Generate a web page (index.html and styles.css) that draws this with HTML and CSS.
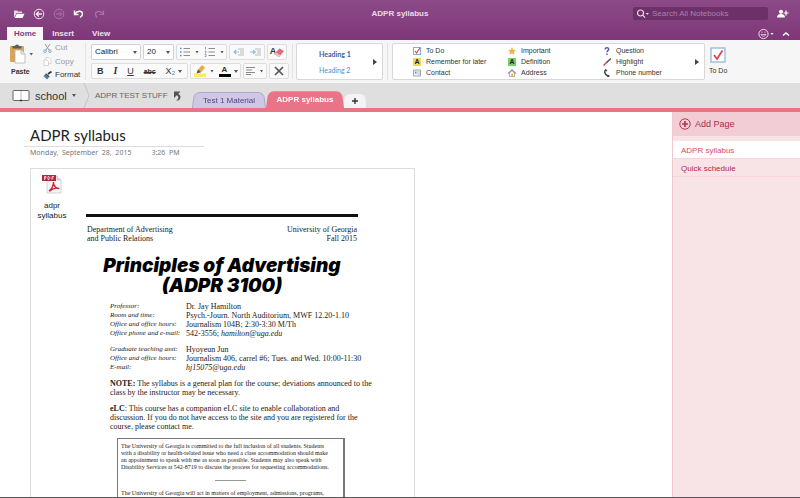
FILE: index.html
```html
<!DOCTYPE html>
<html lang="en">
<head>
<meta charset="utf-8">
<title>ADPR syllabus</title>
<link rel="stylesheet" href="styles.css">
</head>
<body>
<header class="top">
  <div class="titlebar">
    <div class="quick">
      <button aria-label="Open"><svg width="12" height="10" viewBox="0 0 12 10"><path d="M1 8V1.500h3l1 1h4V4H3.500L1.500 8.500z" fill="#e8d5e6"/><path d="M3.800 4.800H11.500L9.500 9H1.800z" fill="#fff"/></svg></button>
      <button aria-label="Back"><svg width="12" height="12" viewBox="0 0 12 12" fill="none" stroke="#f2e5f0"><circle cx="6" cy="6" r="4.800"/><path d="M9 6H3.500M5.800 3.500L3.300 6l2.500 2.500" stroke-width="1.300"/></svg></button>
      <button aria-label="Forward" disabled><svg width="12" height="12" viewBox="0 0 12 12" fill="none" stroke="#aa79a7"><circle cx="6" cy="6" r="4.800"/><path d="M3 6h5.500M6.200 3.500L8.700 6 6.200 8.500"/></svg></button>
      <button aria-label="Undo"><svg width="12" height="10" viewBox="0 0 12 10" fill="none" stroke="#fff" stroke-width="1.400"><path d="M1.500 1.500v4h4M2 5C4 1.500 9 1.500 9.500 4.500 9.700 6.500 8.500 7.500 7 8.500"/></svg></button>
      <button aria-label="Redo" disabled><svg width="12" height="10" viewBox="0 0 12 10" fill="none" stroke="#a574a3" stroke-width="1.200"><path d="M10.500 1.500v4h-4M10 5C8 1.500 3 1.500 2.500 4.500 2.300 6.500 3 7.500 4 8.500"/></svg></button>
    </div>
    <h1 class="window-title">ADPR syllabus</h1>
    <div class="find">
      <label class="search">
        <svg width="14" height="10" viewBox="0 0 14 10" fill="none" stroke="#ead9e9" stroke-width="1.200"><circle cx="4.500" cy="4" r="3"/><path d="M6.700 6.200L9 8.700"/><path d="M9.500 4h3.500l-1.750 1.800z" fill="#ead9e9" stroke="none"/></svg>
        <input type="search" placeholder="Search All Notebooks" aria-label="Search All Notebooks">
      </label>
      <button aria-label="Share"><svg width="12" height="10" viewBox="0 0 12 10" fill="#fff"><circle cx="4" cy="2.800" r="2.100"/><path d="M0 8.500C.3 5.500 2 5 4 5s3.700.5 4 3.500z"/><path d="M9 1.500v5M6.800 4h4.700" stroke="#fff" stroke-width="1.200"/></svg></button>
    </div>
  </div>
  <nav class="menu">
    <a class="menu-tab active" href="#">Home</a><a class="menu-tab" href="#">Insert</a><a class="menu-tab" href="#">View</a>
    <div class="menu-tools">
      <button aria-label="Feedback"><svg width="16" height="12" viewBox="0 0 16 12" fill="none" stroke="#ecdcea"><circle cx="5.500" cy="6" r="4.600"/><path d="M3 6.500c.8 2.300 4.200 2.300 5 0z" stroke-width=".8"/><path d="M3.500 4.200h1M6.500 4.200h1"/><path d="M12.500 5h3L14 7z" fill="#fff" stroke="none"/></svg></button>
      <button aria-label="Collapse ribbon"><svg width="8" height="6" viewBox="0 0 8 6" fill="none" stroke="#fff" stroke-width="1.500"><path d="M1 4.500L4 2l3 2.500"/></svg></button>
    </div>
  </nav>
</header>

<section class="ribbon" aria-label="Home ribbon">
  <div class="clipboard">
    <button class="big paste"><svg width="24" height="22" viewBox="0 0 24 22"><rect x="1" y="3" width="14" height="16" rx="1" fill="#d9a558"/><path d="M3.500 5.500V3h2.200a2.500 2.500 0 0 1 4.600 0h2.200v2.500z" fill="#5d5d62"/><path d="M6 7h6l4 4v9H6z" fill="#fff" stroke="#aaa" stroke-width=".7"/><path d="M12 7v4h4" fill="#eee" stroke="#aaa" stroke-width=".7"/><path d="M20.500 10h3.500l-1.750 2.500z" fill="#666"/></svg><span>Paste</span></button>
    <div class="clip-list">
      <button class="dim"><svg width="9" height="9" viewBox="0 0 9 9" fill="none"><path d="M2 0l4 6M7 0L3 6" stroke="#999"/><circle cx="2" cy="7.200" r="1.300" stroke="#79a9d8"/><circle cx="7" cy="7.200" r="1.300" stroke="#79a9d8"/></svg>Cut</button>
      <button class="dim"><svg width="9" height="9" viewBox="0 0 9 9" fill="#fff" stroke="#ccc" stroke-width=".8"><path d="M3 .5h3l2 2v4H3z"/><path d="M1 3h3l1.500 1.500v4H1z"/></svg>Copy</button>
      <button><svg width="9" height="9" viewBox="0 0 9 9"><path d="M5 3L8.500.5" stroke="#333" stroke-width="1.700"/><path d="M3 2.500l3.500 3L4 8.500.5 5z" fill="#58779e"/><path d="M2.800 2.700l3.500 3" stroke="#333"/></svg>Format</button>
    </div>
  </div>
  <div class="font-tools">
    <div class="tool-row">
      <span class="pick family"><select aria-label="Font"><option>Calibri</option></select></span>
      <span class="pick size"><select aria-label="Font size"><option>20</option></select></span>
      <div class="group lists">
        <button aria-label="Bullets"><svg width="20" height="10" viewBox="0 0 20 10"><path d="M1 1.500h1.500M1 5h1.500M1 8.500h1.500" stroke="#5b8fd0" stroke-width="1.500"/><path d="M4.500 1.500H11M4.500 5H11M4.500 8.500H11" stroke="#8b8b8b"/><path d="M16.500 4h3L18 6.500z" fill="#555"/></svg></button>
        <button aria-label="Numbering"><svg width="20" height="10" viewBox="0 0 20 10"><path d="M1.500 0v2.500M.8 4h1.200v2H.8M.8 7.500h1.200v2H.8" stroke="#5b8fd0" stroke-width=".8" fill="none"/><path d="M4.500 1.500H11M4.500 5H11M4.500 8.500H11" stroke="#8b8b8b"/><path d="M16.500 4h3L18 6.500z" fill="#555"/></svg></button>
      </div>
      <div class="group indents">
        <button aria-label="Decrease indent"><svg width="12" height="8" viewBox="0 0 12 8"><path d="M5 1h6M7 3h4M7 5h4M5 7h6" stroke="#bbb"/><path d="M6 4H1M3.200 2L1 4l2.200 2" stroke="#8dbce4" stroke-width="1.200" fill="none"/></svg></button>
        <button aria-label="Increase indent"><svg width="12" height="8" viewBox="0 0 12 8"><path d="M5 1h6M7 3h4M7 5h4M5 7h6" stroke="#bbb"/><path d="M0 4h5M3 2l2.200 2L3 6" stroke="#8dbce4" stroke-width="1.200" fill="none"/></svg></button>
      </div>
      <div class="group single"><button class="eraser" aria-label="Clear formatting"><span>A</span><svg width="10" height="12" viewBox="0 0 10 12"><path d="M0 8l5.500-5.500L10 5 5 11z" fill="#dc6c80"/><path d="M0 8l1.800-1.800L6.500 9.200 5 11z" fill="#f2bcc6"/></svg></button></div>
    </div>
    <div class="tool-row">
      <div class="group letters">
        <button><b>B</b></button><button><i>I</i></button><button><u>U</u></button><button><s>abc</s></button><button class="sub-btn">X<sub>2</sub><span class="caret"></span></button>
      </div>
      <div class="group colours">
        <button aria-label="Highlight colour"><svg width="20" height="12" viewBox="0 0 20 12"><rect y="8.500" width="12" height="3.500" fill="#f8ec65"/><path d="M3 8l1-3.500L8 0l3 2.500-3.500 4.500z" fill="#e9ad3f"/><path d="M2.500 8.500L4 4.500l3 2.800z" fill="#555"/><path d="M16.500 5h3L18 7.500z" fill="#555"/></svg></button>
        <button class="ink" aria-label="Font colour"><span>A</span><span class="caret"></span></button>
      </div>
      <div class="group align"><button aria-label="Align"><svg width="18" height="8" viewBox="0 0 18 8"><path d="M0 .5h9M0 3h6M0 5.500h9M0 7.500h5" stroke="#888"/><path d="M14 3h3l-1.500 2.500z" fill="#555"/></svg></button></div>
      <div class="group single"><button aria-label="Delete"><svg width="10" height="10" viewBox="0 0 10 10" stroke="#555" stroke-width="1.700"><path d="M1 1l8 8M9 1L1 9"/></svg></button></div>
    </div>
  </div>
  <div class="gallery styles"><div><button class="h-one">Heading 1</button><button class="h-two">Heading 2</button></div><button class="more" aria-label="More styles"></button></div>
  <div class="divider"></div>
  <div class="gallery tags">
    <div class="tag-grid">
      <button><svg width="8" height="8" viewBox="0 0 8 8"><rect x=".5" y=".5" width="7" height="7" fill="#fff" stroke="#82add6"/><path d="M2 4l1.500 2L7 1" fill="none" stroke="#d4465a" stroke-width="1.200"/></svg>To Do</button>
      <button><svg width="8" height="8" viewBox="0 0 8 8"><path d="M4 0l1.200 2.700L8 3 5.900 4.900 6.500 8 4 6.300 1.500 8l.6-3.100L0 3l2.800-.3z" fill="#edb643"/></svg>Important</button>
      <button><svg width="8" height="8" viewBox="0 0 8 8" fill="none" stroke="#6755a7" stroke-width="1.500"><path d="M2 2.500C2.300 0 6 .3 5.700 2.500 5.500 3.800 4 3.700 4 5.200M4 6.500V8"/></svg>Question</button>
      <button><span class="letter yellow">A</span>Remember for later</button>
      <button><span class="letter green">A</span>Definition</button>
      <button><svg width="8" height="8" viewBox="0 0 8 8"><path d="M.5 7.500L4 4" stroke="#d4465a" stroke-width="1.500"/><path d="M3.500 4.500L8 .5" stroke="#555" stroke-width="1.500"/></svg>Highlight</button>
      <button><svg width="8" height="8" viewBox="0 0 8 8"><path d="M.5 1h7v6h-7z" fill="#edf2f8" stroke="#9aa6b4"/><path d="M2 2.500h1.500v2H2z" fill="#5b8fd0"/><path d="M4.500 3H7M4.500 5H7" stroke="#9aa6b4" stroke-width=".7"/></svg>Contact</button>
      <button><svg width="8" height="8" viewBox="0 0 8 8"><path d="M1.500 4v3.600h5V4L4 1.500z" fill="#fff" stroke="#888" stroke-width=".7"/><path d="M0 4.500L4 .7l4 3.800" fill="none" stroke="#666"/><path d="M3.200 4.500h1.800v3H3.200z" fill="#edb643"/></svg>Address</button>
      <button><svg width="8" height="8" viewBox="0 0 8 8"><path d="M3 .5C1 2 1.500 6 5.500 7.500" fill="none" stroke="#444" stroke-width="1.500"/><path d="M2.500 0l2 1.500-1 1.300M4.500 5.500l2.300 1L6 8H4.500" fill="#444"/></svg>Phone number</button>
    </div>
    <button class="more" aria-label="More tags"></button>
  </div>
  <button class="big todo"><svg width="16" height="16" viewBox="0 0 16 16"><rect x="1" y="1" width="14" height="14" fill="#fff" stroke="#8fb7df" stroke-width="1.300"/><path d="M4 8l3 4 5.500-8.500" fill="none" stroke="#d94457" stroke-width="1.800"/></svg><span>To Do</span></button>
</section>

<nav class="sections" aria-label="Sections">
  <button class="notebook"><svg width="18" height="13" viewBox="0 0 18 13"><rect x="1" y="1.500" width="16" height="10" rx="1" fill="#fff" stroke="#666"/><path d="M9 2v9.500" stroke="#bbb"/><path d="M8 11.500h2" stroke="#333" stroke-width="1.500"/></svg><span>school</span><span class="caret"></span></button>
  <svg class="chev" width="8" height="25" viewBox="0 0 8 25" fill="none" stroke="#c4c4c4"><path d="M1 0l5 12.500L1 25"/></svg>
  <a class="crumb" href="#">ADPR TEST STUFF</a>
  <button aria-label="Up a level" class="up"><svg width="9" height="11" viewBox="0 0 9 11"><path d="M1 1.500h6.500L5.300 3.700C8.500 6 8.200 9 5 10.500H3C6 8.800 6 6.800 3.800 5.200L1 8z" fill="#555"/></svg></button>
  <a class="section-tab lilac" href="#">Test 1 Material</a>
  <a class="section-tab rose" href="#">ADPR syllabus</a>
  <button class="section-tab add" aria-label="Add section"><svg width="8" height="8" viewBox="0 0 8 8" stroke="#333" stroke-width="1.400"><path d="M4 1v6M1 4h6"/></svg></button>
</nav>

<div class="workspace">
  <main class="page">
    <div class="page-head">
      <h2>ADPR syllabus</h2>
      <p><span>Monday,&nbsp; September&nbsp; 28,&nbsp; 2015</span><span>3:26&nbsp; PM</span></p>
    </div>
    <article class="printout">
      <a class="file" href="#"><svg width="20" height="20" viewBox="0 0 20 20"><path d="M5 1h10l4 4v13H5z" fill="#f6f6f6" stroke="#ccc" stroke-width=".8"/><path d="M15 1v4h4" fill="#ddd" stroke="#bbb" stroke-width=".6"/><rect width="14" height="6" fill="#a72d3c"/><path d="M2.500 5V1.500h1.500v1.700H2.500M6 1.500v3h1l.7-.7V2.200L7 1.500zM10 5V1.500h2M10 3h1.500" fill="none" stroke="#fff" stroke-width=".7"/><path d="M7 16c2-1 5-6 4.500-9M11.300 8c1 4 3 5.500 6 5.500-4-1-7 0-9.500 2.500" fill="none" stroke="#cb2537" stroke-width="1.400"/></svg><span>adpr<br>syllabus</span></a>
      <div class="paper">
        <div class="masthead"><div>Department of Advertising<br>and Public Relations</div><div>University of Georgia<br>Fall 2015</div></div>
        <h3>Principles of Advertising<br>(ADPR 3100)</h3>
        <div class="body">
          <dl>
            <dt>Professor:</dt><dd>Dr. Jay Hamilton</dd>
            <dt>Room and time:</dt><dd>Psych.-Journ. North Auditorium, MWF 12.20-1.10</dd>
            <dt>Office and office hours:</dt><dd>Journalism 104B; 2:30-3:30 M/Th</dd>
            <dt>Office phone and e-mail:</dt><dd>542-3556; <i>hamilton@uga.edu</i></dd>
          </dl>
          <dl>
            <dt>Graduate teaching asst:</dt><dd>Hyoyeun Jun</dd>
            <dt>Office and office hours:</dt><dd>Journalism 406, carrel #6; Tues. and Wed. 10:00-11:30</dd>
            <dt>E-mail:</dt><dd><i>hj15075@uga.edu</i></dd>
          </dl>
          <p><b>NOTE:</b> The syllabus is a general plan for the course; deviations announced to the<br>class by the instructor may be necessary.</p>
          <p><b>eLC</b>: This course has a companion eLC site to enable collaboration and<br>discussion. If you do not have access to the site and you are registered for the<br>course, please contact me.</p>
          <div class="notice">
            <p>The University of Georgia is committed to the full inclusion of all students. Students<br>with a disability or health-related issue who need a class accommodation should make<br>an appointment to speak with me as soon as possible. Students may also speak with<br>Disability Services at 542-8719 to discuss the process for requesting accommodations.</p>
            <hr>
            <p>The University of Georgia will act in matters of employment, admissions, programs,</p>
          </div>
        </div>
      </div>
    </article>
  </main>
  <aside class="pages">
    <button class="add-page"><svg width="12" height="12" viewBox="0 0 12 12" fill="none" stroke="#b43650"><circle cx="6" cy="6" r="5.200"/><path d="M6 3v6M3 6h6" stroke-width="1.700"/></svg>Add Page</button>
    <a class="current" href="#">ADPR syllabus</a>
    <a href="#">Quick schedule</a>
  </aside>
</div>
</body>
</html>
```
FILE: styles.css
```css
* { box-sizing: border-box; }
body {
  margin: 0;
  height: 100vh;
  overflow: hidden;
  display: flex;
  flex-direction: column;
  font: 8px/10px "Liberation Sans", sans-serif;
  color: #333;
  background: #fff;
  border-bottom: 1px solid #555;
}
h1, h2, h3, p, dl, dd { margin: 0; }
a { color: inherit; text-decoration: none; }
button, input, select { font: inherit; color: inherit; margin: 0; padding: 0; border: 0; background: none; white-space: nowrap; }
svg { display: block; flex: none; }
.caret { border: 2px solid transparent; border-top: 3px solid #555; border-bottom: 0; }

.top { flex: none; background: linear-gradient(#8c4a89, #7e3778); color: #fff; }
.titlebar { display: grid; grid-template-columns: 1fr auto 1fr; align-items: center; height: 27px; }
.quick { display: flex; align-items: center; gap: 8px; padding-left: 13px; }
.window-title { font-size: 8px; line-height: 12px; font-weight: bold; color: #eadde9; }
.find { display: flex; justify-content: flex-end; align-items: center; gap: 9px; padding-right: 11px; }
.search { display: flex; align-items: center; gap: 2px; width: 135px; height: 13px; padding-left: 3px; border-radius: 2px; background: #6d3069; }
.search input { min-width: 0; flex: 1; font-size: 8px; outline: 0; appearance: none; }
.search input::placeholder { color: #ad80aa; opacity: 1; }
.menu { display: flex; height: 13px; padding-left: 7px; padding-right: 10px; font-size: 8px; font-weight: bold; }
.menu-tab { padding: 0 9px; line-height: 14px; color: #eee0ed; }
.menu-tab.active { padding: 0 7px; background: #f9f9f9; color: #823f7d; }
.menu-tools { display: flex; align-items: center; gap: 8px; margin-left: auto; }

.ribbon { flex: none; display: flex; align-items: center; height: 43px; padding-left: 9px; background: #f6f6f6; }
.clipboard { display: flex; gap: 9px; width: 77px; height: 37px; border-right: 1px solid #e2e2e2; flex: none; }
.big { display: flex; flex-direction: column; align-items: center; gap: 2px; font-size: 7px; line-height: 10px; }
.paste { width: 25px; font-weight: bold; align-items: flex-start; }
.paste span { padding-left: 2px; }
.clip-list { display: flex; flex-direction: column; justify-content: space-between; }
.clip-list button { display: flex; align-items: center; gap: 3px; }
.clip-list .dim { color: #999; }
.font-tools { display: flex; flex-direction: column; gap: 3px; width: 207px; padding-left: 5px; border-right: 1px solid #e2e2e2; flex: none; }
.tool-row { display: flex; gap: 2px; }
.pick { position: relative; display: flex; height: 16px; border: 1px solid #d2d2d2; border-radius: 2px; background: #fff; }
.pick::after { content: ""; position: absolute; right: 3px; top: 6px; border: 2px solid transparent; border-top: 3px solid #555; border-bottom: 0; }
.pick select { appearance: none; width: 100%; padding-left: 3px; font-size: 8px; color: #222; }
.family { width: 50px; }
.size { width: 31px; }
.group { display: flex; align-items: center; justify-content: space-around; height: 16px; border: 1px solid #ddd; border-radius: 2px; background: #fafafa; }
.lists { width: 51px; }
.indents { width: 36px; }
.single { width: 20px; }
.letters { width: 97px; font-size: 9px; }
.letters i { font-family: "Liberation Serif", serif; font-weight: bold; font-size: 10px; }
.letters s { font-size: 7px; font-weight: bold; }
.colours { width: 51px; }
.align { width: 24px; }
.sub-btn, .ink { display: flex; align-items: center; gap: 3px; }
.sub-btn sub { padding-top: 4px; font-size: 6px; line-height: 8px; color: #397fc5; margin-left: -3px; }
.ink span:first-child { width: 12px; font-weight: bold; line-height: 9px; border-bottom: 3px solid #000; }
.eraser { display: flex; font-size: 9px; font-weight: bold; }
.eraser svg { margin-left: -2px; }
.gallery { display: flex; align-items: center; justify-content: space-between; height: 37px; padding-right: 5px; border: 1px solid #d8d8d8; border-radius: 2px; background: #fff; }
.styles { width: 87px; margin-left: 3px; padding-left: 22px; font-family: Lato, sans-serif; }
.styles div { display: flex; flex-direction: column; gap: 6px; align-items: flex-start; }
.h-one { font-size: 7px; font-weight: bold; color: #3c609c; }
.h-two { font-size: 7px; color: #4a8fd0; }
.more { border: 3px solid transparent; border-left: 4px solid #444; border-right: 0; }
.divider { height: 37px; margin: 0 4px; border-left: 1px solid #e2e2e2; }
.tags { flex: 0 1 313px; padding-left: 20px; }
.tag-grid { display: grid; grid-template-columns: 95px 95px 80px; row-gap: 1px; font-size: 7px; }
.tag-grid button { display: flex; align-items: center; gap: 5px; height: 10px; }
.letter { width: 8px; height: 8px; line-height: 8px; font-weight: bold; text-align: center; color: #222; }
.yellow { background: #f5d84f; }
.green { background: #72d267; }
.todo { padding-left: 4px; gap: 3px; }

.sections { flex: none; display: flex; align-items: flex-end; height: 29px; padding-left: 12px; background: #dfdfdf; border-bottom: 4px solid #e97488; }
.notebook { display: flex; align-items: center; gap: 5px; height: 25px; width: 71px; font-size: 11px; color: #333; }
.crumb { padding-left: 4px; line-height: 25px; font-size: 8px; color: #666; width: 82px; white-space: nowrap; }
.up { align-self: center; width: 19px; }
.section-tab { position: relative; isolation: isolate; flex: none; height: 17px; text-align: center; line-height: 19px; white-space: nowrap; }
.section-tab::before { content: ""; position: absolute; z-index: -1; inset: 0; border-radius: 6px 6px 0 0; transform: perspective(40px) rotateX(8deg); transform-origin: bottom; }
.lilac { width: 74px; font-size: 8px; color: #54408b; }
.lilac::before { background: #cfc8e4; border: 1px solid #afa3cf; border-bottom: 0; }
.rose { width: 78px; height: 18px; font-weight: bold; color: #fff; }
.rose::before { background: #e97488; }
.add { display: flex; align-items: center; justify-content: center; width: 22px; height: 15px; }
.add::before { background: #f4f4f4; }

.workspace { flex: 1; min-height: 0; display: flex; }
.page { flex: 1; min-width: 0; overflow: hidden; padding: 12px 24px 0; }
.page-head { width: 180px; }
.page-head h2 { padding-left: 6px; font: 15px/22px Lato, sans-serif; color: #222; border-bottom: 1px solid #ddd; }
.page-head p { display: flex; gap: 20px; padding: 1px 0 0 6px; font: 7px/10px "Noto Sans", sans-serif; color: #777; white-space: nowrap; }
.printout { display: flex; width: 385px; height: 420px; margin: 10px 0 0 6px; border: 1px solid #ddd; }
.file { width: 55px; padding: 6px 13px 0 0; display: flex; flex-direction: column; align-items: center; gap: 6px; text-align: center; color: #222; flex: none; }
.paper { width: 272px; padding-top: 45px; font: 8px/9px "Liberation Serif", serif; color: #222; white-space: nowrap; }
.masthead { display: flex; justify-content: space-between; padding: 8px 1px 0; border-top: 3px solid #111; }
.masthead div:last-child { text-align: right; }
.paper h3 { margin-top: 13px; text-align: center; font: italic 900 19px/20px Inter, sans-serif; color: #000; }
.body { padding: 6px 0 0 24px; }
.body dl { display: grid; grid-template-columns: 76px 1fr; margin-bottom: 7px; }
.body dt { font-size: 7px; font-style: italic; }
.body > p { margin-bottom: 7px; }
.notice { width: 228px; margin-left: 7px; padding: 4px 3px; border: 1px solid #777; border-right-width: 2px; font-size: 6px; line-height: 7px; }
.notice hr { width: 31px; height: 1px; margin: 9px auto; border: 0; background: #999; }

.pages { width: 128px; flex: none; background: #f8e3e6; border-left: 1px solid #f0c9d0; color: #a92e47; }
.add-page { display: flex; align-items: center; gap: 4px; width: 100%; height: 24px; padding-left: 6px; margin-bottom: 5px; font-size: 9px; background: #f2cdd5; }
.pages a { display: block; height: 18px; padding-left: 8px; line-height: 20px; border-bottom: 1px solid #f4d6db; }
.pages .current { background: #fff; color: #d84b64; }
```
